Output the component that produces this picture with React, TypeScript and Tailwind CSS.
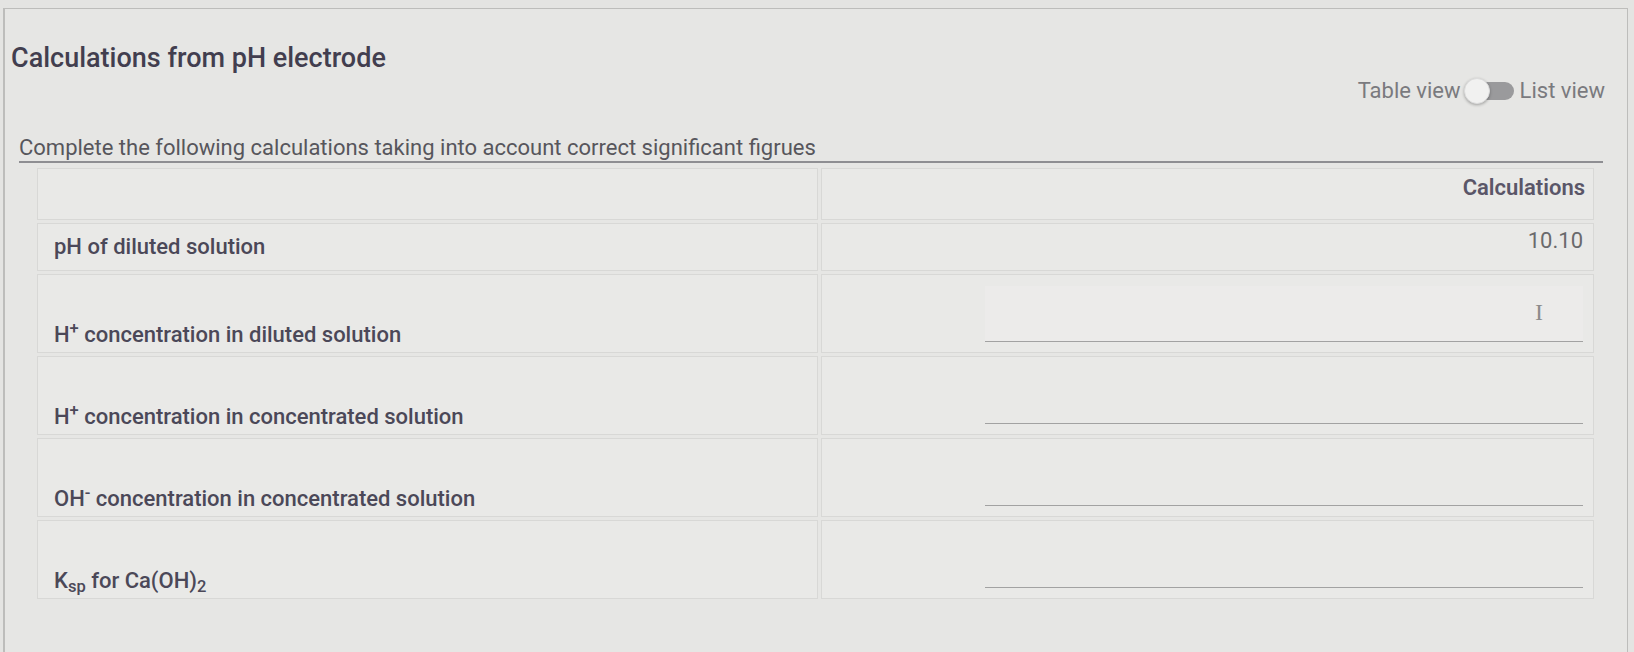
import React from "react";

interface CalcRow {
  label: React.ReactNode;
  value?: string;
  cursor?: boolean;
}

const ROWS: CalcRow[] = [
  { label: "pH of diluted solution", value: "10.10" },
  {
    label: (
      <>
        H<sup>+</sup> concentration in diluted solution
      </>
    ),
    cursor: true,
  },
  {
    label: (
      <>
        H<sup>+</sup> concentration in concentrated solution
      </>
    ),
  },
  {
    label: (
      <>
        OH<sup>-</sup> concentration in concentrated solution
      </>
    ),
  },
  {
    label: (
      <>
        K<sub>sp</sub> for Ca(OH)<sub>2</sub>
      </>
    ),
  },
];

const CELL = "border border-[#d8d8d6] bg-[#e9e9e7]";

function ViewToggle() {
  return (
    <div className="flex h-[30px] items-center justify-end text-[22px] leading-[30px] text-[#7a7a7e]">
      <span>Table view</span>
      <div className="relative ml-[3px] h-[26px] w-[50px]">
        <div className="absolute right-0 top-[4px] h-[18px] w-[36px] rounded-l-[4px] rounded-r-full bg-[#9a9a9c]" />
        <div className="absolute left-0 top-0 h-[26px] w-[26px] rounded-full border border-[#dcdcdc] bg-[#f1f1f0] shadow-[0_1px_3px_rgba(0,0,0,0.3)]" />
      </div>
      <span className="ml-[6px]">List view</span>
    </div>
  );
}

function AnswerInput({ cursor }: { cursor?: boolean }) {
  return (
    <div
      className={`relative ml-auto h-[56px] w-[598px] border-b-[1.5px] border-[#a2a2a2] ${
        cursor ? "bg-[#ecebea]" : ""
      }`}
    >
      {cursor && (
        <span className="absolute right-[40px] top-[12px] font-['Liberation_Serif',serif] text-[24px] leading-[28px] text-[#8c8c8c]">
          I
        </span>
      )}
    </div>
  );
}

export default function App() {
  return (
    <div className="h-[652px] w-[1634px] overflow-hidden bg-[#e4e4e2] font-['Roboto',sans-serif]">
      <div className="ml-[3px] mt-[8px] h-[650px] w-[1625px] border-l-2 border-r border-t border-[#bdbdbb] bg-[#e6e6e4]">
        <h1 className="pl-[6px] pt-[32px] text-[27px] font-medium leading-[34px] text-[#423e4f]">
          Calculations from pH electrode
        </h1>

        <div className="mr-[22px] mt-[1px]">
          <ViewToggle />
        </div>

        <div className="ml-[14px] mr-[24px] mt-[29px] border-b-2 border-[#8e8e92] text-[22px] leading-[26px] text-[#57565c]">
          Complete the following calculations taking into account correct significant figrues
        </div>

        <table className="ml-[29px] mt-[2px] w-[1563px] table-fixed border-separate border-spacing-[3px]">
          <colgroup>
            <col className="w-[781px]" />
            <col />
          </colgroup>
          <thead>
            <tr>
              <th className={`${CELL} h-[52px]`} />
              <th
                className={`${CELL} h-[52px] pr-[8px] pt-[4px] text-right align-top text-[22px] font-semibold leading-[30px] text-[#5a5668]`}
              >
                Calculations
              </th>
            </tr>
          </thead>
          <tbody>
            {ROWS.map((row, i) => {
              const first = i === 0;
              return (
                <tr key={i}>
                  <td
                    className={`${CELL} pl-[16px] text-[22px] font-medium leading-[30px] text-[#4b4858] ${
                      first ? "h-[48px] align-middle" : "h-[79px] pb-[2px] align-bottom"
                    }`}
                  >
                    {row.label}
                  </td>
                  {first ? (
                    <td
                      className={`${CELL} h-[48px] pr-[10px] pt-[2px] text-right align-top text-[22px] leading-[30px] text-[#6a6a6c]`}
                    >
                      {row.value}
                    </td>
                  ) : (
                    <td className={`${CELL} h-[79px] pb-[10px] pr-[10px] align-bottom`}>
                      <AnswerInput cursor={row.cursor} />
                    </td>
                  )}
                </tr>
              );
            })}
          </tbody>
        </table>
      </div>
    </div>
  );
}
